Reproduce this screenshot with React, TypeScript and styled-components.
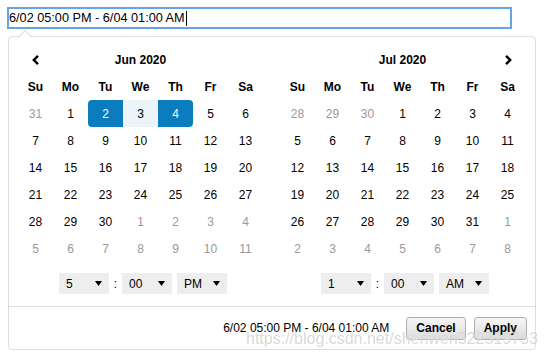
import styled, { createGlobalStyle } from 'styled-components'

const GlobalStyle = createGlobalStyle`
  body {
    margin: 0;
    background: #fff;
    font-family: "Liberation Sans", Arial, sans-serif;
    color: #000;
  }
`

type Day = { n: number; off?: boolean; state?: 'start' | 'end' | 'range' }

const DOW = ['Su', 'Mo', 'Tu', 'We', 'Th', 'Fr', 'Sa']

// build 6 weeks, starting from the given leading days of the previous month
const buildMonth = (prevLast: number, lead: number, len: number): Day[] => {
  const days: Day[] = []
  for (let i = lead - 1; i >= 0; i--) days.push({ n: prevLast - i, off: true })
  for (let d = 1; d <= len; d++) days.push({ n: d })
  let next = 1
  while (days.length < 42) days.push({ n: next++, off: true })
  return days
}

const june = buildMonth(31, 1, 30).map((d) => {
  if (d.off) return d
  if (d.n === 2) return { ...d, state: 'start' as const }
  if (d.n === 3) return { ...d, state: 'range' as const }
  if (d.n === 4) return { ...d, state: 'end' as const }
  return d
})
const july = buildMonth(30, 3, 31)

const Arrow = () => (
  <svg width="7" height="5" viewBox="0 0 7 5">
    <polygon points="0,0 7,0 3.5,5" fill="#000" />
  </svg>
)

const Chevron = ({ dir }: { dir: 'left' | 'right' }) => (
  <svg width="10" height="12" viewBox="0 0 10 12">
    <path
      d={dir === 'left' ? 'M7 1.8 L2.8 6 L7 10.2' : 'M3 1.8 L7.2 6 L3 10.2'}
      fill="none"
      stroke="#000"
      strokeWidth="2.4"
    />
  </svg>
)

type CalProps = {
  title: string
  days: Day[]
  nav: 'left' | 'right'
  time: [string, string, string]
}

const Calendar = ({ title, days, nav, time }: CalProps) => (
  <CalBox>
    <Grid>
      <NavCell>{nav === 'left' && <Chevron dir="left" />}</NavCell>
      <MonthTitle>{title}</MonthTitle>
      <NavCell>{nav === 'right' && <Chevron dir="right" />}</NavCell>
      {DOW.map((d) => (
        <DowCell key={d}>{d}</DowCell>
      ))}
      {days.map((d, i) => (
        <DayCell key={i} $off={d.off} $state={d.state}>
          {d.n}
        </DayCell>
      ))}
    </Grid>
    <TimeRow>
      <Select>
        {time[0]}
        <Arrow />
      </Select>
      <Colon>:</Colon>
      <Select>
        {time[1]}
        <Arrow />
      </Select>
      <Select $ml={5}>
        {time[2]}
        <Arrow />
      </Select>
    </TimeRow>
  </CalBox>
)

const App = () => {
  return (
    <Page>
      <GlobalStyle />
      <Field>
        6/02 05:00 PM - 6/04 01:00 AM
        <Caret />
      </Field>
      <Popup>
        <Calendars>
          <Calendar title="Jun 2020" days={june} nav="left" time={['5', '00', 'PM']} />
          <Calendar title="Jul 2020" days={july} nav="right" time={['1', '00', 'AM']} />
        </Calendars>
        <Footer>
          <Selected>6/02 05:00 PM - 6/04 01:00 AM</Selected>
          <Button>Cancel</Button>
          <Button>Apply</Button>
        </Footer>
      </Popup>
      <Watermark>https://blog.csdn.net/shenwen522519753</Watermark>
    </Page>
  )
}

export default App

const Page = styled.div`
  position: relative;
  width: 546px;
  height: 356px;
  box-sizing: border-box;
  padding: 7px 0 0 7px;
  overflow: hidden;
`

const Field = styled.div`
  width: 505px;
  height: 22px;
  box-sizing: border-box;
  border: 2px solid #66a3e7;
  display: flex;
  align-items: center;
  font-size: 12.7px;
  white-space: pre;
`

const Caret = styled.span`
  width: 1px;
  height: 15px;
  background: #000;
  margin-left: 1px;
`

const Popup = styled.div`
  position: relative;
  margin: 7px 0 0 1px;
  width: 528px;
  box-sizing: border-box;
  border: 1px solid #ddd;
  border-radius: 4px;

  &::before {
    content: '';
    position: absolute;
    top: -7px;
    left: 9px;
    border-left: 7px solid transparent;
    border-right: 7px solid transparent;
    border-bottom: 7px solid #ccc;
  }

  &::after {
    content: '';
    position: absolute;
    top: -6px;
    left: 10px;
    border-left: 6px solid transparent;
    border-right: 6px solid transparent;
    border-bottom: 6px solid #fff;
  }
`

const Calendars = styled.div`
  display: flex;
  gap: 17px;
  padding: 9px 10px 12px 9px;
`

const CalBox = styled.div`
  width: 245px;
`

const Grid = styled.div`
  display: grid;
  grid-template-columns: repeat(7, 35px);
  grid-auto-rows: 27px;
  font-size: 12px;
`

const Cell = styled.div`
  display: flex;
  align-items: center;
  justify-content: center;
`

const NavCell = styled(Cell)``

const MonthTitle = styled(Cell)`
  grid-column: span 5;
  font-weight: bold;
`

const DowCell = styled(Cell)`
  font-weight: bold;
`

const DayCell = styled(Cell)<{ $off?: boolean; $state?: 'start' | 'end' | 'range' }>`
  color: ${(p) => (p.$off ? '#999' : p.$state === 'start' || p.$state === 'end' ? '#fff' : '#000')};
  background: ${(p) =>
    p.$state === 'range' ? '#ebf4f8' : p.$state ? '#0b7cbd' : 'transparent'};
  border-radius: ${(p) =>
    p.$state === 'start' ? '4px 0 0 4px' : p.$state === 'end' ? '0 4px 4px 0' : '0'};
`

const TimeRow = styled.div`
  display: flex;
  justify-content: center;
  align-items: center;
  margin-top: 11px;
  padding-left: 5px;
  font-size: 12px;
`

const Select = styled.div<{ $ml?: number }>`
  width: 50px;
  height: 21px;
  box-sizing: border-box;
  margin-left: ${(p) => p.$ml ?? 0}px;
  padding: 0 7px;
  background: #eee;
  display: flex;
  align-items: center;
  justify-content: space-between;
`

const Colon = styled.span`
  width: 13px;
  text-align: center;
`

const Footer = styled.div`
  display: flex;
  justify-content: flex-end;
  align-items: center;
  height: 42px;
  border-top: 1px solid #ddd;
  padding-right: 8px;
  font-size: 12px;
`

const Selected = styled.span`
  margin-right: 9px;
`

const Button = styled.button`
  height: 23px;
  margin-left: 8px;
  padding: 0 9px;
  font: bold 12px "Liberation Sans", Arial, sans-serif;
  color: #000;
  border: 1px solid #adadad;
  border-radius: 3px;
  background: linear-gradient(#f6f6f6, #dcdcdc);
`

const Watermark = styled.span`
  position: absolute;
  left: 246px;
  top: 331px;
  font-size: 16px;
  line-height: 1;
  color: rgba(170, 170, 170, 0.45);
  text-shadow: 0 0 1px #fff;
  white-space: nowrap;
  pointer-events: none;
`
